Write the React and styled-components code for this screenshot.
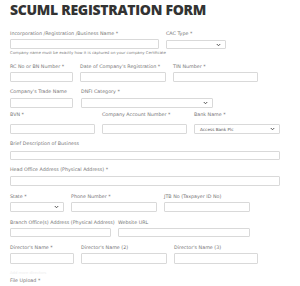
import React from 'react';
import styled, { createGlobalStyle } from 'styled-components';

const GlobalStyle = createGlobalStyle`
  html, body {
    margin: 0;
    padding: 0;
    background: #ffffff;
  }
`;

const Page = styled.div`
  width: 300px;
  height: 286px;
  overflow: hidden;
  box-sizing: border-box;
  padding: 3px 10px 0 10px;
  font-family: 'DejaVu Sans', 'Open Sans', sans-serif;
`;

const Title = styled.h1`
  margin: 0;
  font-family: 'Open Sans', sans-serif;
  font-weight: 800;
  font-size: 14px;
  line-height: 14px;
  color: #333333;
  letter-spacing: -0.3px;
`;

const Row = styled.div`
  display: flex;
  gap: ${(p) => p.gap || 7}px;
  margin-top: ${(p) => p.top}px;
`;

const Field = styled.div`
  display: flex;
  flex-direction: column;
  width: ${(p) => p.w}px;
`;

const Label = styled.label`
  display: block;
  height: 6px;
  line-height: 6px;
  font-size: 4.8px;
  color: #757575;
  white-space: nowrap;
  margin-bottom: ${(p) => p.mb ?? 2}px;
`;

const Input = styled.div`
  box-sizing: border-box;
  height: ${(p) => p.h || 10}px;
  border: 1px solid #d9d9d9;
  border-radius: 1px;
  background: #ffffff;
`;

const Select = styled(Input)`
  display: flex;
  align-items: center;
  justify-content: space-between;
  padding: 0 4px 0 5px;
  font-size: 4.2px;
  color: #555555;
`;

const Helper = styled.div`
  height: 5px;
  margin-top: 1px;
  line-height: 5px;
  font-size: 3.9px;
  color: #808080;
  white-space: nowrap;
`;

const Faint = styled.div`
  height: 4px;
  margin-top: 7px;
  line-height: 4px;
  font-size: 3.8px;
  color: #eeeeee;
`;

const Chevron = () => (
  <svg width="5" height="4" viewBox="0 0 10 8">
    <path d="M1.5 2 L5 5.5 L8.5 2" fill="none" stroke="#444" strokeWidth="1.8" />
  </svg>
);

const TextField = ({ w, label, mb, h }) => (
  <Field w={w}>
    <Label mb={mb}>{label}</Label>
    <Input h={h} />
  </Field>
);

const SelectField = ({ w, label, mb, value, h }) => (
  <Field w={w}>
    <Label mb={mb}>{label}</Label>
    <Select h={h}>
      <span>{value}</span>
      <Chevron />
    </Select>
  </Field>
);

export default function App() {
  return (
    <Page>
      <GlobalStyle />
      <Title>SCUML REGISTRATION FORM</Title>

      <Row top={14}>
        <Field w={149}>
          <Label mb={2}>Incorporation /Registration /Business Name *</Label>
          <Input />
          <Helper>Company name must be exactly how it is captured on your company Certificate</Helper>
        </Field>
        <SelectField w={60} label="CAC Type *" mb={3} h={9} />
      </Row>

      <Row top={9}>
        <TextField w={63} label="RC No or BN Number *" />
        <TextField w={86} label="Date of Company's Registration *" />
        <TextField w={85} label="TIN Number *" />
      </Row>

      <Row top={7} gap={8}>
        <TextField w={63} label="Company's Trade Name" mb={3} />
        <SelectField w={132} label="DNFI Category *" mb={3} />
      </Row>

      <Row top={4}>
        <TextField w={85} label="BVN *" mb={6} />
        <TextField w={85} label="Company Account Number *" mb={6} />
        <SelectField w={86} label="Bank Name *" mb={6} value="Access Bank Plc" />
      </Row>

      <Row top={7}>
        <TextField w={270} label="Brief Description of Business" mb={4} h={9} />
      </Row>

      <Row top={7}>
        <TextField w={270} label="Head Office Address (Physical Address) *" mb={3} />
      </Row>

      <Row top={8}>
        <SelectField w={54} label="State *" />
        <TextField w={86} label="Phone Number *" />
        <TextField w={86} label="JTB No (Taxpayer ID No)" />
      </Row>

      <Row top={8}>
        <TextField w={101} label="Branch Office(s) Address (Physical Address)" h={9} />
        <TextField w={132} label="Website URL" h={9} />
      </Row>

      <Row top={8}>
        <TextField w={64} label="Director's Name *" h={11} />
        <TextField w={86} label="Director's Name (2)" h={11} />
        <TextField w={84} label="Director's Name (3)" h={11} />
      </Row>

      <Faint>Add more directors</Faint>
      <Row top={3}>
        <Field w={100}>
          <Label>File Upload *</Label>
        </Field>
      </Row>
    </Page>
  );
}
